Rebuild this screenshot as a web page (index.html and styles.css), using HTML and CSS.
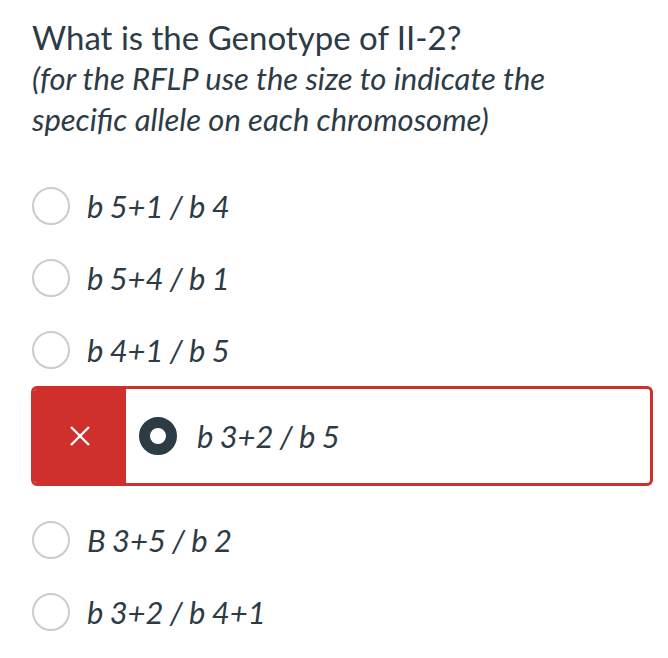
FILE: index.html
```html
<!DOCTYPE html>
<html>
<head>
<meta charset="utf-8">
<link rel="stylesheet" href="styles.css">
</head>
<body>
<div class="quiz">
  <div class="question">
    <p class="q-main">What is the Genotype of II-2?</p>
    <p class="q-note">(for the RFLP use the size to indicate the specific allele on each chromosome)</p>
  </div>
  <div class="answers">
    <div class="answer"><span class="radio"></span><span class="label">b 5+1 / b 4</span></div>
    <div class="answer"><span class="radio"></span><span class="label">b 5+4 / b 1</span></div>
    <div class="answer"><span class="radio"></span><span class="label">b 4+1 / b 5</span></div>
    <div class="answer-wrong">
      <div class="flag">
        <svg width="22" height="22" viewBox="0 0 22 22"><path d="M2 2 L20 20 M20 2 L2 20" stroke="#fff" stroke-width="2.4" fill="none"/></svg>
      </div>
      <div class="wrong-body"><span class="radio selected"></span><span class="label">b 3+2 / b 5</span></div>
    </div>
    <div class="answer"><span class="radio"></span><span class="label">B 3+5 / b 2</span></div>
    <div class="answer"><span class="radio"></span><span class="label">b 3+2 / b 4+1</span></div>
  </div>
</div>
</body>
</html>
```
FILE: styles.css
```css
html, body {
  margin: 0;
  padding: 0;
  background: #fff;
}
body {
  font-family: Lato, "Open Sans", sans-serif;
  color: #2d3b45;
}
.quiz {
  padding: 17px 15px 0 32px;
}
.question {
  max-width: 560px;
}
.question p {
  margin: 0;
  font-size: 33px;
  line-height: 41px;
}
.question .q-note {
  font-size: 31px;
  font-style: italic;
}
.answers {
  margin-top: 30px;
}
.answer {
  height: 72px;
  display: flex;
  align-items: center;
  gap: 17px;
}
.radio {
  box-sizing: border-box;
  width: 38px;
  height: 38px;
  border-radius: 50%;
  border: 2px solid #c7cdd1;
  background: #fff;
  flex: none;
}
.radio.selected {
  border: 11px solid #2d3b45;
}
.label {
  font-size: 31px;
  font-style: italic;
  word-spacing: -1px;
}
.answer-wrong {
  margin-left: -1px;
  margin-bottom: 18px;
  height: 100px;
  box-sizing: border-box;
  border: 3px solid #d0302c;
  border-radius: 6px;
  display: flex;
  overflow: hidden;
}
.flag {
  width: 92px;
  background: #d0302c;
  display: flex;
  align-items: center;
  justify-content: center;
  flex: none;
}
.wrong-body {
  display: flex;
  align-items: center;
  gap: 20px;
  padding-left: 13px;
}
```
